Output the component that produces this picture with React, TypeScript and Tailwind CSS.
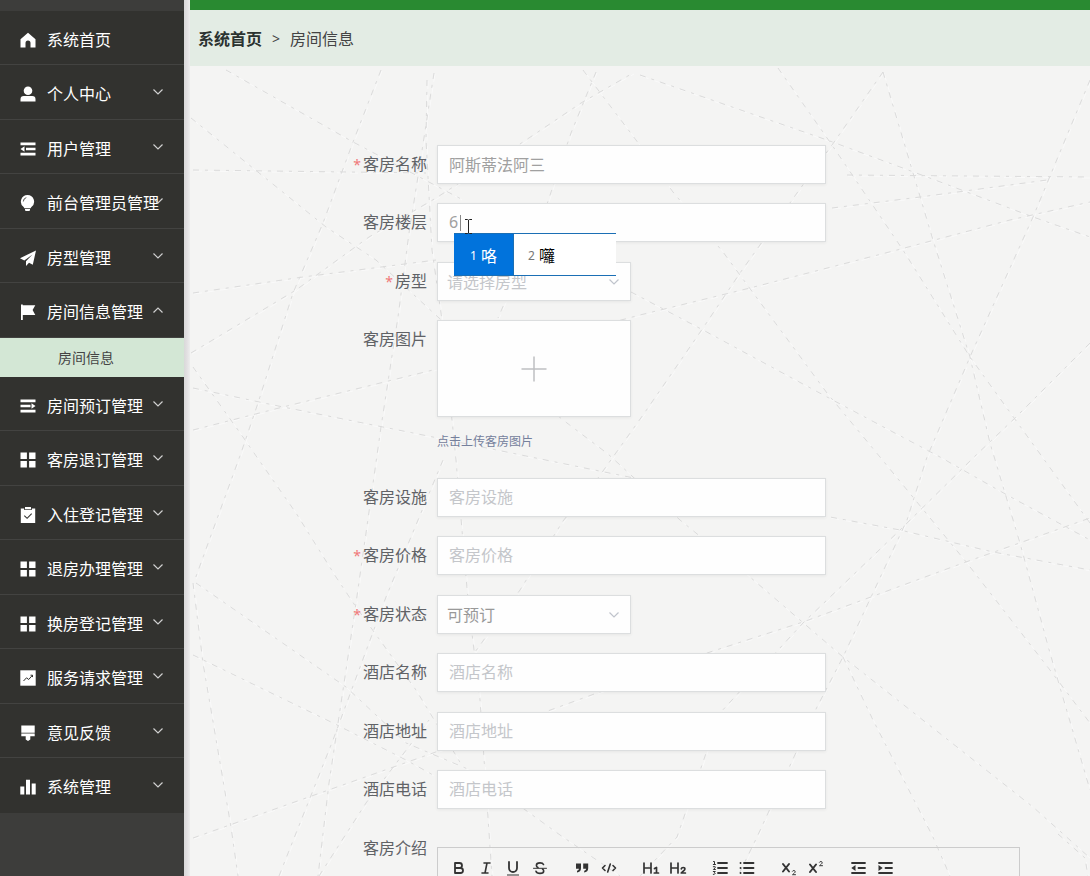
import React from "react";

type IconName =
  | "home" | "user" | "fold" | "bulb" | "send" | "flag" | "unfold"
  | "grid" | "claim" | "chart" | "platform" | "data";

const ICONS: Record<IconName, React.ReactNode> = {
  home: <path d="M8 .8.5 7.200v8.300h5V11a2.500 2.500 0 0 1 5 0v4.500h5V7.200z" />,
  user: (
    <>
      <circle cx="8" cy="4.800" r="4.300" />
      <path d="M.5 15.500v-2.200A3.300 3.300 0 0 1 3.800 10h8.400a3.300 3.300 0 0 1 3.300 3.300v2.200z" />
    </>
  ),
  fold: (
    <path d="M.5 1.500h15v2.700H.5zM6 6.700h9.500v2.600H6zM.5 11.800h15v2.700H.5zM.5 8l4-2.800v5.600z" />
  ),
  bulb: (
    <>
      <path d="M7.500 0a6.600 6.600 0 0 1 3.900 11.900c-.5.400-.7.900-.7 1.400H4.300c0-.5-.2-1-.7-1.400A6.600 6.600 0 0 1 7.500 0z" />
      <path d="M5 14.100h5v.8a1.100 1.100 0 0 1-1.100 1.100H6.100A1.100 1.100 0 0 1 5 14.900z" />
      <path d="M3.300 6.500a4.200 4.200 0 0 1 3-3.900" fill="none" stroke="#32322f" strokeWidth=".8" />
    </>
  ),
  send: <path d="M16 .5 0 8.200l4.300 2.300L12.500 4.500 6 11.300V16l3-3.300 3.800 2z" />,
  flag: <path d="M1 .5h1.800V1.200H15.300l-2.700 4.900 2.700 4.900H2.800v5H1z" />,
  unfold: (
    <path d="M.5 1.500h15v2.700H.5zM.5 6.700h10v2.600H.5zM.5 11.800h15v2.700H.5zM15.500 8l-4-2.800v5.600z" />
  ),
  grid: <path d="M.5.500h6.400v6.600H.5zM9.100.500h6.400v6.600H9.100zM.5 9h6.400v6.500H.5zM9.100 9h6.400v6.500H9.100z" />,
  claim: (
    <>
      <path d="M.8 1.500h3.400v1.600h7.600V1.500h3.400v14.500H.8z" />
      <path d="M5 0h6v2.300H5z" />
      <path d="m4.300 8.700 2.800 2.600 4.600-4.600" fill="none" stroke="#32322f" strokeWidth="1.100" />
    </>
  ),
  chart: (
    <>
      <path d="M.3.300h15.400v15.400H.3z" />
      <path d="m3.500 11 3-3.200 2.200 1.700 3.800-4.300M10.500 5.200h2v1.900" fill="none" stroke="#32322f" strokeWidth="1" />
    </>
  ),
  platform: (
    <path d="M1.300.500h13.400v7.200H1.300zM1.300 8.500h13.400v2.700h-4.400v3.400L8 16l-2.300-1.400v-3.400H1.300z" />
  ),
  data: <path d="M.3 7.500h4v8h-4zM6 .8h4v14.700H6zM11.700 4.500h4v11h-4z" />,
};

function MenuIcon({ name }: { name: IconName }) {
  return (
    <svg viewBox="0 0 16 16" className="size-4 shrink-0 fill-white" aria-hidden="true">
      {ICONS[name]}
    </svg>
  );
}

function Chevron({ up = false, className }: { up?: boolean; className: string }) {
  return (
    <svg viewBox="0 0 12 12" className={className} fill="none" stroke="currentColor" aria-hidden="true">
      <path d={up ? "m1.500 8.500 4.500-4.500 4.500 4.500" : "m1.500 3.500 4.500 4.500 4.500-4.500"} strokeWidth="1.200" />
    </svg>
  );
}

const MENU: { icon: IconName; label: string; leaf?: boolean; children?: string[] }[] = [
  { icon: "home", label: "系统首页", leaf: true },
  { icon: "user", label: "个人中心" },
  { icon: "fold", label: "用户管理" },
  { icon: "bulb", label: "前台管理员管理" },
  { icon: "send", label: "房型管理" },
  { icon: "flag", label: "房间信息管理", children: ["房间信息"] },
  { icon: "unfold", label: "房间预订管理" },
  { icon: "grid", label: "客房退订管理" },
  { icon: "claim", label: "入住登记管理" },
  { icon: "grid", label: "退房办理管理" },
  { icon: "grid", label: "换房登记管理" },
  { icon: "chart", label: "服务请求管理" },
  { icon: "platform", label: "意见反馈" },
  { icon: "data", label: "系统管理" },
];

function Sidebar() {
  return (
    <nav className="w-[184px] shrink-0 overflow-hidden bg-[#3d3d3b] pt-[11px]">
      <ul>
        {MENU.map((item, i) => (
          <li key={item.label} className="group">
            <button
              type="button"
              aria-expanded={item.leaf ? undefined : Boolean(item.children)}
              className={
                (i % 2 ? "h-[55px]" : "h-[54px]") +
                " relative flex w-full items-center gap-[11px] border-b border-[#434341] bg-[#32322f] pt-1 pl-5 text-base whitespace-nowrap text-white group-last:border-[#32322f]"
              }
            >
              <MenuIcon name={item.icon} />
              <span>{item.label}</span>
              {!item.leaf && (
                <Chevron up={Boolean(item.children)} className="absolute top-[21px] right-5 size-3 text-[#d0d0d0]" />
              )}
            </button>
            {item.children?.map((c) => (
              <a key={c} href="#rooms" className="flex h-[39px] items-center bg-[#d3e7d5] pl-[58px] text-sm text-[#444]">
                {c}
              </a>
            ))}
          </li>
        ))}
      </ul>
    </nav>
  );
}

const THREADS = [
  "226,70 353,142 463,200",
  "191,118 326,227 376,260 439,318 563,420 608,454 680,520 750,577 843,657 1033,807 1090,858",
  "381,70 353,142 323,223 293,293 258,403 241,453 194,582",
  "434,73 419,170 409,233 398,317 381,427 366,533 356,603 343,690 329,783 318,876",
  "427,80 426,140 432,250 442,320 456,460 468,600 480,700 492,876",
  "193,170 426,173",
  "193,293 303,277 436,260",
  "191,353 296,290 369,237 436,198 523,142 581,103 633,73",
  "193,367 243,437 261,463 296,513 336,577 356,607 416,690 463,767",
  "193,388 283,407 433,437 619,475 830,517 900,530 993,552 1090,570",
  "193,430 283,407 433,370 640,315 750,288 897,250 1010,220 1090,202",
  "196,583 346,687 406,743 470,770 560,835 620,876",
  "193,655 333,723 406,760 433,775",
  "193,583 203,663 231,827 238,876",
  "193,838 306,798 433,753 586,697 710,652 803,622 963,563 1090,518",
  "279,876 333,740 386,597 443,460",
  "319,876 366,803 429,720",
  "640,75 827,140 927,177 1033,217 1090,237",
  "778,68 832,145 903,250 970,357 1030,440 1090,523",
  "883,72 832,145 797,193 740,273 703,328 643,415 598,478 563,521 520,590 475,652",
  "883,72 933,240 970,357 990,443 1020,543 1050,653 1090,790",
  "1090,80 1033,217 973,350 927,457 907,520 843,657 817,707 757,837 738,876",
  "847,175 1090,177",
  "832,208 920,197 1047,180",
  "583,70 636,140 673,192 723,252 827,393 880,457 967,563 1050,670 1090,723",
  "596,72 571,133 545,210 498,318",
  "631,292 703,330 827,397 940,457 1007,495 1090,540",
  "1090,343 1015,418 973,458 900,530 803,623 720,713 677,837 640,876",
  "843,657 873,720 933,837 950,876",
  "1058,834 1085,858 1088,876",
];

function Backdrop() {
  return (
    <svg className="pointer-events-none absolute inset-0 size-full" fill="none" aria-hidden="true">
      <g transform="translate(-184 0)" strokeWidth="1">
        <g stroke="#fafafa" strokeDasharray="8 5" transform="translate(1 1)">
          {THREADS.map((p) => <polyline key={p} points={p} />)}
        </g>
        <g stroke="#dbdbdb" strokeDasharray="6 6 3 6">
          {THREADS.map((p) => <polyline key={p} points={p} />)}
        </g>
      </g>
    </svg>
  );
}

const BOX = "border border-[#dcdedf] bg-[#fefefe] shadow-[0_1px_3px_rgba(0,0,0,0.06)] outline-none";

function Row({ id, label, required, children }: {
  id: string; label: string; required?: boolean; children: React.ReactNode;
}) {
  return (
    <div className="flex items-start odd:mb-[19px] even:mb-5">
      <label htmlFor={id} className="w-[237px] shrink-0 pr-[10px] text-right text-base leading-[39px] text-[#606266]">
        {required && <span className="mr-0.5 text-sm text-[#f07878]">*</span>}
        {label}
      </label>
      <div className="relative min-w-0 flex-1">{children}</div>
    </div>
  );
}

function TextField({ id, placeholder, value }: { id: string; placeholder?: string; value?: string }) {
  return (
    <input
      id={id}
      type="text"
      defaultValue={value}
      placeholder={placeholder}
      className={BOX + " block h-[39px] w-[389px] max-w-full px-[11px] pb-0.5 text-base text-[#a0a0a0] placeholder:text-[#c4c6ca]"}
    />
  );
}

function SelectField({ id, options, empty }: { id: string; options: string[]; empty?: boolean }) {
  return (
    <div className="relative w-[194px]">
      <select
        id={id}
        className={
          BOX + " block h-[39px] w-full appearance-none px-[9px] text-base " + (empty ? "text-[#c4c6ca]" : "text-[#999]")
        }
      >
        {options.map((o) => <option key={o}>{o}</option>)}
      </select>
      <Chevron className="pointer-events-none absolute top-[14px] right-[11px] size-3 text-[#c0c4cc]" />
    </div>
  );
}

function CandidateWindow() {
  return (
    <div className="absolute top-[30px] left-[17px] z-10 flex h-[43px] w-[162px] border-y border-[#1b6fb5] bg-white text-base">
      <div className="flex w-[59px] items-center justify-center gap-1 bg-[#0173dc] pt-0.5 text-white">
        <span className="text-xs">1</span>
        <span>咯</span>
      </div>
      <div className="flex items-center gap-1 border-l border-[#1b6fb5] pt-0.5 pl-[14px] text-black">
        <span className="text-xs text-[#777]">2</span>
        <span>囖</span>
      </div>
    </div>
  );
}

const S = { fill: "none", stroke: "#333", strokeWidth: 1.8, strokeLinecap: "round", strokeLinejoin: "round" } as const;
const THIN = { ...S, strokeWidth: 1 } as const;

const TOOLS: [string, React.ReactNode][][] = [
  [
    ["加粗", <path {...S} d="M5 4h4.500a2.500 2.500 0 0 1 0 5H5zM5 9h5.500a2.500 2.500 0 0 1 0 5H5z" />],
    ["斜体", <path {...S} strokeWidth={1.600} d="M7 4h6M5 14h6M8 14l2-10" />],
    ["下划线", <><path {...S} d="M5 3v6a4 4 0 0 0 8 0V3" /><rect x="3" y="15.500" width="12" height="1" fill="#333" /></>],
    ["删除线", <><path {...S} strokeWidth={1.600} d="M12.500 5.500C12 4.300 10.700 3.900 9 3.900c-2 0-3.600.8-3.600 2.500 0 1 .6 1.700 1.600 2.100M11.500 10c.8.500 1.200 1 1.200 1.900 0 1.600-1.600 2.500-3.700 2.500-2.200 0-3.600-.8-4-2.200" /><path {...THIN} d="M2.500 9.300h13" /></>],
  ],
  [
    ["引用", <path fill="#333" d="M3 4.500h5v4.700c0 2.500-1.500 4-4 4.300v-1.700c1.200-.3 1.800-1 1.900-2.100H3zM10.200 4.500h5v4.700c0 2.500-1.500 4-4 4.300v-1.700c1.200-.3 1.800-1 1.900-2.100h-2.900z" />],
    ["代码", <path {...S} strokeWidth={1.600} d="M5 6.500 2.500 9 5 11.500M13 6.500 15.500 9 13 11.500M10.300 5 7.700 13" />],
  ],
  [
    ["标题 1", <path {...S} strokeWidth={1.700} d="M2 4v10M9 4v10M2 9h7M12.500 9.500l2-1V14M12.300 14h4.200" />],
    ["标题 2", <path {...S} strokeWidth={1.700} d="M2 4v10M9 4v10M2 9h7M12.300 9.800c.2-.9.900-1.300 1.800-1.300 1.100 0 1.800.6 1.800 1.500 0 1.300-1.900 2.200-3.700 4h4.200" />],
  ],
  [
    ["有序列表", <><path {...S} strokeWidth={1.800} d="M7 4h9M7 9h9M7 14h9" /><path {...THIN} d="M2.500 2.500h1v3M2.300 5.500h2.200M2.300 7.700h1.900v1L2.400 10.500h2M2.300 12.500h2l-1 1.200c1.300.1 1.200 1.900-1 1.700" /></>],
    ["无序列表", <path {...S} strokeWidth={1.800} d="M6 4h9.500M6 9h9.500M6 14h9.500M2.500 4h.1M2.500 9h.1M2.500 14h.1" />],
  ],
  [
    ["下标", <><path {...S} strokeWidth={2} d="m3 5 6 7.500M9 5l-6 7.500" /><path {...THIN} d="M12.400 12.200c.3-1 2.800-1.100 2.800.5 0 1-1.500 1.700-2.700 3h3" /></>],
    ["上标", <><path {...S} strokeWidth={2} d="m3 5.500 6 7.500M9 5.500 3 13" /><path {...THIN} d="M12.400 3.200c.3-1 2.800-1.100 2.800.5 0 1-1.500 1.700-2.700 3h3" /></>],
  ],
  [
    ["减少缩进", <><path {...S} strokeWidth={1.800} d="M3 4h13M3 14h13M9.500 9H16" /><path fill="#333" d="M6.500 6v6L2.300 9z" /></>],
    ["增加缩进", <><path {...S} strokeWidth={1.800} d="M3 4h13M3 14h13M9.500 9H16" /><path fill="#333" d="M2.500 6v6L6.700 9z" /></>],
  ],
];

function Editor() {
  return (
    <div className="mt-[18px] mr-[70px] border border-[#ccc]">
      <div className="flex flex-wrap gap-x-[15px] px-[7px] py-2">
        {TOOLS.map((group, g) => (
          <div key={g} className="flex">
            {group.map(([name, icon]) => (
              <button key={name} type="button" aria-label={name} className="flex h-6 w-[27px] items-center justify-center">
                <svg viewBox="0 0 18 18" className="size-[18px]" aria-hidden="true">{icon}</svg>
              </button>
            ))}
          </div>
        ))}
      </div>
      <textarea id="intro" className="block h-64 w-full resize-none border-t border-[#ccc] bg-transparent p-3 outline-none" />
    </div>
  );
}

export default function App() {
  return (
    <div className="flex h-screen overflow-hidden bg-[#f4f4f3] font-['Noto_Sans','Noto_Sans_CJK_SC',sans-serif]">
      <Sidebar />
      <main className="relative flex min-w-0 flex-1 flex-col">
        <Backdrop />
        <header className="relative shrink-0">
          <div className="h-[10px] bg-[#298a31]" />
          <div className="flex h-14 items-center gap-[10px] bg-[#e3ece4] pt-0.5 pl-[14px] text-base text-[#444]">
            <a href="#home" className="font-bold text-[#2b3330]">系统首页</a>
            <span className="text-sm">&gt;</span>
            <span>房间信息</span>
          </div>
        </header>
        <div className="absolute inset-y-0 left-0 w-[6px] bg-linear-to-r from-[#d9d9d9] via-[#e2e0e2] to-[#ededed]" />
        <form className="relative min-h-0 flex-1 overflow-y-auto pt-[79px] pl-4 [scrollbar-width:none]">
          <Row id="name" label="客房名称" required>
            <TextField id="name" value="阿斯蒂法阿三" />
          </Row>
          <Row id="floor" label="客房楼层">
            <TextField id="floor" value="6" />
            <span className="absolute top-3 left-[23px] h-4 w-px bg-[#888]" />
            <CandidateWindow />
            <svg viewBox="0 0 9 17" className="absolute top-[15px] left-[27px] z-20 h-[17px] w-[9px]" fill="none" stroke="#222" aria-hidden="true">
              <path d="M1 1.500h2.500l1 .7 1-.7H8M4.500 2v13M1 15.500h2.500l1-.7 1 .7H8" />
            </svg>
          </Row>
          <Row id="type" label="房型" required>
            <SelectField id="type" options={["请选择房型"]} empty />
          </Row>
          <Row id="photo" label="客房图片">
            <button id="photo" type="button" className={BOX + " flex h-[97px] w-[194px] items-center justify-center"}>
              <svg viewBox="0 0 26 26" className="size-[26px]" stroke="#bfc0c2" strokeWidth="1.500" aria-hidden="true">
                <path d="M13 .5v25M.5 13h25" />
              </svg>
            </button>
            <p className="mt-[9px] text-xs leading-8 text-[#75809c]">点击上传客房图片</p>
          </Row>
          <Row id="facility" label="客房设施">
            <TextField id="facility" placeholder="客房设施" />
          </Row>
          <Row id="price" label="客房价格" required>
            <TextField id="price" placeholder="客房价格" />
          </Row>
          <Row id="status" label="客房状态" required>
            <SelectField id="status" options={["可预订"]} />
          </Row>
          <Row id="hotel" label="酒店名称">
            <TextField id="hotel" placeholder="酒店名称" />
          </Row>
          <Row id="address" label="酒店地址">
            <TextField id="address" placeholder="酒店地址" />
          </Row>
          <Row id="phone" label="酒店电话">
            <TextField id="phone" placeholder="酒店电话" />
          </Row>
          <Row id="intro" label="客房介绍">
            <Editor />
          </Row>
        </form>
      </main>
    </div>
  );
}
